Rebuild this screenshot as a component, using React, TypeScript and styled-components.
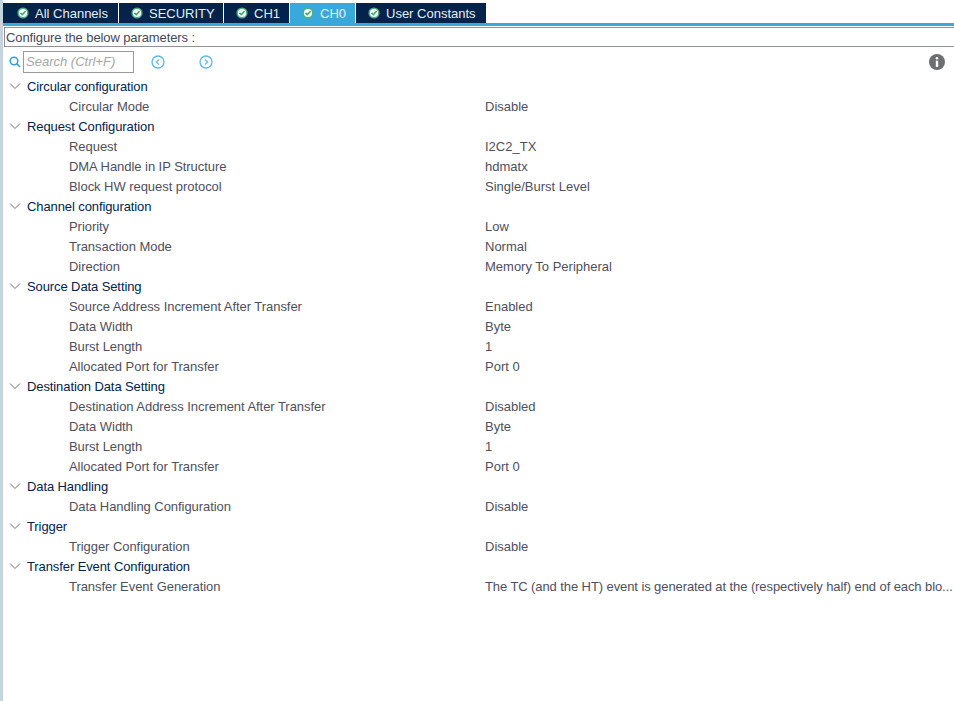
import React from "react";
import styled, { createGlobalStyle } from "styled-components";

const GlobalStyle = createGlobalStyle`
  html, body {
    margin: 0;
    padding: 0;
    background: #ffffff;
    overflow: hidden;
  }
`;

const Page = styled.div`
  width: 954px;
  height: 701px;
  box-sizing: border-box;
  border-left: 3px solid #c6d3e0;
  padding-top: 3px;
  font-family: "Liberation Sans", Arial, sans-serif;
  font-size: 13px;
  color: #4f4f5c;
  overflow: hidden;
`;

const TabBar = styled.div`
  display: flex;
  height: 20px;
  gap: 1px;
  border-bottom: 3px solid #39a9dc;
`;

const Tab = styled.div<{ $active?: boolean; $width: number }>`
  width: ${(p) => p.$width}px;
  display: flex;
  align-items: center;
  padding-left: 12px;
  gap: 6px;
  box-sizing: border-box;
  background: ${(p) => (p.$active ? "#39a9dc" : "#03234b")};
  color: #e6edf3;

  &:first-child {
    padding-left: 14px;
  }
`;

const TabCheck = styled.svg`
  margin-top: -1px;
`;

const ParamsBox = styled.div`
  margin-left: 1px;
  height: 20px;
  line-height: 19px;
  box-sizing: border-box;
  margin-top: 1px;
  border: 1px solid #8f9397;
  border-right: none;
  padding-left: 1px;
  letter-spacing: -0.1px;
  color: #44495a;
`;

const SearchRow = styled.div`
  display: flex;
  align-items: center;
  height: 22px;
  margin-top: 4px;
  padding-left: 6px;
`;

const SearchField = styled.div`
  width: 111px;
  height: 22px;
  box-sizing: border-box;
  margin-left: 2px;
  border: 1px solid #9a9a9a;
  padding-left: 2px;
  line-height: 20px;
  font-style: italic;
  color: #a6a6a6;
`;

const NavButton = styled.svg<{ $gap: number }>`
  margin-left: ${(p) => p.$gap}px;
`;

const InfoButton = styled.svg`
  margin-left: auto;
  margin-right: 9px;
`;

const Tree = styled.div`
  margin-top: 3px;
`;

const GroupRow = styled.div`
  display: flex;
  align-items: center;
  height: 20px;
  padding-left: 6px;
  color: #03234b;
  letter-spacing: -0.1px;
`;

const Chevron = styled.svg`
  width: 12px;
  height: 8px;
  margin-right: 6px;
`;

const ParamRow = styled.div`
  display: grid;
  grid-template-columns: 416px 1fr;
  align-items: center;
  height: 20px;
  padding-left: 66px;
  white-space: nowrap;
`;

const ParamName = styled.span`
  letter-spacing: -0.05px;
`;

const ParamValue = styled.span<{ $long?: boolean }>`
  letter-spacing: ${(p) => (p.$long ? "-0.09px" : "0")};
`;

function CheckIcon() {
  return (
    <TabCheck width="12" height="12" viewBox="0 0 12 12">
      <circle cx="6" cy="6" r="5.6" fill="#4caf7d" />
      <circle cx="6" cy="6" r="4.1" fill="#f6fbf8" />
      <path d="M3.5 5.9l1.8 1.8 3.2-3.4" fill="none" stroke="#3fa572" strokeWidth="1.6" />
    </TabCheck>
  );
}

function NavIcon({ dir, gap }: { dir: "left" | "right"; gap: number }) {
  return (
    <NavButton $gap={gap} width="14" height="14" viewBox="0 0 14 14">
      <circle cx="7" cy="7" r="6" fill="none" stroke="#5db8e4" strokeWidth="1.3" />
      <path
        d={dir === "left" ? "M8 4.4L5.4 7 8 9.6" : "M6 4.4L8.6 7 6 9.6"}
        fill="none"
        stroke="#5db8e4"
        strokeWidth="1.3"
      />
    </NavButton>
  );
}

const tabs = [
  { label: "All Channels", width: 115 },
  { label: "SECURITY", width: 104 },
  { label: "CH1", width: 65 },
  { label: "CH0", width: 65, active: true },
  { label: "User Constants", width: 130 },
];

const groups: { title: string; rows: [string, string][] }[] = [
  { title: "Circular configuration", rows: [["Circular Mode", "Disable"]] },
  {
    title: "Request Configuration",
    rows: [
      ["Request", "I2C2_TX"],
      ["DMA Handle in IP Structure", "hdmatx"],
      ["Block HW request protocol", "Single/Burst Level"],
    ],
  },
  {
    title: "Channel configuration",
    rows: [
      ["Priority", "Low"],
      ["Transaction Mode", "Normal"],
      ["Direction", "Memory To Peripheral"],
    ],
  },
  {
    title: "Source Data Setting",
    rows: [
      ["Source Address Increment After Transfer", "Enabled"],
      ["Data Width", "Byte"],
      ["Burst Length", "1"],
      ["Allocated Port for Transfer", "Port 0"],
    ],
  },
  {
    title: "Destination Data Setting",
    rows: [
      ["Destination Address Increment After Transfer", "Disabled"],
      ["Data Width", "Byte"],
      ["Burst Length", "1"],
      ["Allocated Port for Transfer", "Port 0"],
    ],
  },
  { title: "Data Handling", rows: [["Data Handling Configuration", "Disable"]] },
  { title: "Trigger", rows: [["Trigger Configuration", "Disable"]] },
  {
    title: "Transfer Event Configuration",
    rows: [
      [
        "Transfer Event Generation",
        "The TC (and the HT) event is generated at the (respectively half) end of each blo...",
      ],
    ],
  },
];

export default function App() {
  return (
    <Page>
      <GlobalStyle />
      <TabBar>
        {tabs.map((t) => (
          <Tab key={t.label} $active={t.active} $width={t.width}>
            <CheckIcon />
            {t.label}
          </Tab>
        ))}
      </TabBar>
      <ParamsBox>Configure the below parameters :</ParamsBox>
      <SearchRow>
        <svg width="12" height="12" viewBox="0 0 12 12">
          <circle cx="5" cy="5" r="3.8" fill="none" stroke="#2f9fd8" strokeWidth="1.5" />
          <path d="M7.8 7.8L11 11" stroke="#2f9fd8" strokeWidth="1.6" />
        </svg>
        <SearchField>Search (Ctrl+F)</SearchField>
        <NavIcon dir="left" gap={17} />
        <NavIcon dir="right" gap={34} />
        <InfoButton width="16" height="16" viewBox="0 0 16 16">
          <circle cx="8" cy="8" r="8" fill="#6d6e70" />
          <circle cx="8" cy="4.2" r="1.3" fill="#fff" />
          <rect x="6.8" y="6.6" width="2.4" height="6.4" fill="#fff" />
        </InfoButton>
      </SearchRow>
      <Tree>
        {groups.map((g) => (
          <React.Fragment key={g.title}>
            <GroupRow>
              <Chevron viewBox="0 0 12 8">
                <path d="M1 1.5l5 5 5-5" fill="none" stroke="#6b6b6b" strokeWidth="1" />
              </Chevron>
              {g.title}
            </GroupRow>
            {g.rows.map(([name, value]) => (
              <ParamRow key={name}>
                <ParamName>{name}</ParamName>
                <ParamValue $long={value.length > 60}>{value}</ParamValue>
              </ParamRow>
            ))}
          </React.Fragment>
        ))}
      </Tree>
    </Page>
  );
}
